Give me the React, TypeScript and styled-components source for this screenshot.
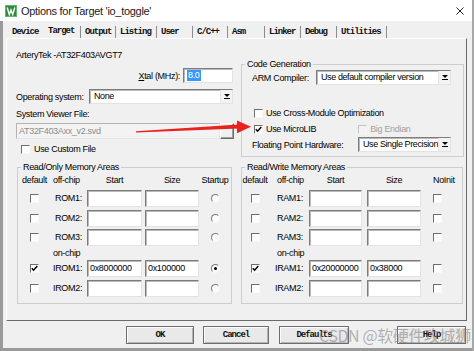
import React from "react";
import styled, { createGlobalStyle } from "styled-components";

const SANS = `"Liberation Sans", Arial, sans-serif`;
const MONO = `"Liberation Mono", "Courier New", monospace`;

const Global = createGlobalStyle`
  html, body { margin: 0; padding: 0; background: #f0f0f0; }
  body { width: 474px; height: 351px; overflow: hidden; }
  * { box-sizing: border-box; }
`;

const Window = styled.div`
  width: 474px;
  height: 351px;
  display: flex;
  flex-direction: column;
  background: #f0f0f0;
  position: relative;
  overflow: hidden;
  font-family: ${SANS};
  font-size: 9px;
  letter-spacing: -0.32px;
  color: #000;
  border-right: 2px solid #a8a8a8;
`;

const TitleBar = styled.div`
  height: 21px;
  flex: none;
  background: #fff;
  display: flex;
  align-items: center;
  padding-left: 5px;
`;

const TitleText = styled.span`
  font-family: "Liberation Sans", Arial, sans-serif;
  font-size: 11px;
  letter-spacing: -0.3px;
  margin-left: 4px;
  color: #1a1a1a;
`;

const CloseBox = styled.div`
  margin-left: auto;
  margin-right: 8px;
  width: 8px;
  height: 8px;
  display: flex;
`;

const Body = styled.div`
  flex: 1;
  display: flex;
  flex-direction: column;
  border-left: 3px solid #9a9a9a;
  border-bottom: 3px solid #9a9a9a;
  padding: 0 5px 0 3px;
`;

const TabStrip = styled.div`
  height: 17px;
  display: flex;
  align-items: flex-end;
  padding-left: 2px;
`;

const Tab = styled.div<{ $w: number; $active?: boolean; $sep?: boolean }>`
  width: ${(p) => p.$w}px;
  height: 12px;
  padding-left: 4px;
  border-right: 1px solid ${(p) => (p.$sep ? "#8c8c8c" : "transparent")};
  font-family: ${MONO};
  font-weight: bold;
  font-size: 9px;
  letter-spacing: -1px;
  line-height: ${(p) => (p.$active ? 10 : 12)}px;
  white-space: nowrap;
  color: #111;
`;

const TabPanel = styled.div`
  height: 283px;
  border-top: 1px solid #fff;
  border-left: 1px solid #fff;
  border-right: 1px solid #6a6a6a;
  border-bottom: 1px solid #6a6a6a;
  display: grid;
  grid-template-columns: 218px 223px;
  column-gap: 7px;
  row-gap: 5px;
  align-content: start;
  padding: 11px 0 0 9px;
`;

const LeftCol = styled.div`
  display: flex;
  flex-direction: column;
`;

const TextLine = styled.div<{ $mt?: number }>`
  height: 11px;
  line-height: 11px;
  margin-top: ${(p) => p.$mt ?? 0}px;
  white-space: nowrap;
`;

const XtalRow = styled.div`
  margin-top: 7px;
  height: 15px;
  display: flex;
  justify-content: flex-end;
  align-items: center;
  gap: 3px;
  padding-right: 1px;
`;

const FieldRow = styled.div<{ $cols: string; $mt: number; $h?: number }>`
  margin-top: ${(p) => p.$mt}px;
  height: ${(p) => p.$h ?? 15}px;
  display: grid;
  grid-template-columns: ${(p) => p.$cols};
  align-items: center;
  white-space: nowrap;
`;

const Sunken = styled.div<{ $w?: number; $h?: number; $disabled?: boolean }>`
  width: ${(p) => (p.$w ? `${p.$w}px` : "auto")};
  height: ${(p) => p.$h ?? 15}px;
  background: ${(p) => (p.$disabled ? "#f3f3f3" : "#fff")};
  border: 1px solid;
  border-color: ${(p) =>
    p.$disabled ? "#b4b4b4 #e6e6e6 #e6e6e6 #b4b4b4" : "#7c7c7c #e3e3e3 #e3e3e3 #7c7c7c"};
  box-shadow: ${(p) => (p.$disabled ? "none" : "inset 1px 1px 0 #b9b9b9")};
  color: ${(p) => (p.$disabled ? "#8c8c8c" : "#000")};
  display: flex;
  align-items: center;
  padding-left: 2px;
  overflow: hidden;
  white-space: nowrap;
  line-height: 11px;
`;

const Selected = styled.span`
  background: #3399ff;
  color: #fff;
  padding: 0 1px;
  margin-left: 1px;
`;

const ComboText = styled.span`
  flex: 1;
  padding-left: 2px;
  letter-spacing: -0.4px;
  overflow: hidden;
`;

const ComboButton = styled.div`
  flex: none;
  width: 12px;
  height: 100%;
  display: flex;
  align-items: center;
  justify-content: center;
  flex-direction: column;
  gap: 1px;
  background: #f3f3f3;
  border-left: 1px solid #e6e6e6;
  &::before {
    content: "";
    width: 0;
    height: 0;
    border-left: 3px solid transparent;
    border-right: 3px solid transparent;
    border-top: 3px solid #000;
  }
  &::after {
    content: "";
    width: 6px;
    height: 1px;
    background: #000;
  }
`;

const BrowseButton = styled.div`
  width: 14px;
  height: 16px;
  background: #f0f0f0;
  border: 1px solid;
  border-color: #fff #6a6a6a #6a6a6a #fff;
  box-shadow: inset -1px -1px 0 #a0a0a0;
`;

const CheckRow = styled.div<{ $mt: number; $ml?: number }>`
  margin-top: ${(p) => p.$mt}px;
  margin-left: ${(p) => p.$ml ?? 0}px;
  height: 10px;
  display: flex;
  align-items: center;
  white-space: nowrap;
`;

const CheckLabel = styled.span<{ $disabled?: boolean; $ml?: number }>`
  margin-left: ${(p) => p.$ml ?? 3}px;
  line-height: 10px;
  color: ${(p) => (p.$disabled ? "#a0a0a0" : "#000")};
`;

const CheckBox = styled.span<{ $disabled?: boolean; $ml?: number }>`
  flex: none;
  display: inline-flex;
  align-items: center;
  justify-content: center;
  width: 9px;
  height: 9px;
  margin-left: ${(p) => p.$ml ?? 0}px;
  background: ${(p) => (p.$disabled ? "#f2f2f2" : "#fdfdfd")};
  border: 1px solid;
  border-color: ${(p) =>
    p.$disabled ? "#c4c4c4 #f6f6f6 #f6f6f6 #c4c4c4" : "#6e6e6e #f8f8f8 #f8f8f8 #6e6e6e"};
`;

const Radio = styled.span<{ $on?: boolean }>`
  width: 9px;
  height: 9px;
  border-radius: 50%;
  border: 1px solid;
  border-color: #7a7a7a #f6f6f6 #f6f6f6 #7a7a7a;
  background: #fbfbfb;
  display: inline-flex;
  align-items: center;
  justify-content: center;
  &::after {
    content: "";
    width: 3px;
    height: 3px;
    border-radius: 50%;
    background: ${(p) => (p.$on ? "#000" : "transparent")};
  }
`;

const Group = styled.fieldset<{ $mt?: number; $ml?: number; $w: number }>`
  margin: ${(p) => p.$mt ?? 0}px 0 0 ${(p) => p.$ml ?? 0}px;
  width: ${(p) => p.$w}px;
  padding: 0;
  border: 1px solid #cdcdcd;
  min-width: 0;
`;

const Legend = styled.legend`
  margin-left: 3px;
  padding: 0 2px;
  height: 11px;
  line-height: 11px;
`;

const GroupInner = styled.div<{ $pl: number; $pb: number }>`
  padding: 0 0 ${(p) => p.$pb}px ${(p) => p.$pl}px;
  display: flex;
  flex-direction: column;
`;

const MemGrid = styled.div<{ $cols: string }>`
  display: grid;
  grid-template-columns: ${(p) => p.$cols};
  grid-template-rows: 15px 21px 19px 19px 12px 19px 20px;
  align-items: center;
  padding-bottom: 5px;
  white-space: nowrap;
`;

const Head = styled.span<{ $align?: string; $pl?: number }>`
  justify-self: ${(p) => p.$align ?? "center"};
  padding-left: ${(p) => p.$pl ?? 0}px;
  line-height: 11px;
`;

const Cell = styled.span<{ $align?: string; $pl?: number }>`
  justify-self: ${(p) => p.$align ?? "start"};
  padding-left: ${(p) => p.$pl ?? 0}px;
  display: inline-flex;
  line-height: 11px;
`;

const OnChip = styled.span<{ $pl: number }>`
  grid-column: 2 / -1;
  padding-left: ${(p) => p.$pl}px;
  align-self: end;
  line-height: 11px;
`;

const MemInput = styled(Sunken)`
  height: 17px;
  align-items: flex-start;
  padding-top: 2px;
`;

const Spacer = styled.span``;

const Footer = styled.div`
  height: 27px;
  display: flex;
  align-items: center;
  padding-left: 120px;
  padding-right: 1px;
`;

const Button = styled.div<{ $w: number; $ml: number; $auto?: boolean }>`
  width: ${(p) => p.$w}px;
  height: 18px;
  margin-left: ${(p) => (p.$auto ? "auto" : `${p.$ml}px`)};
  background: #e9e9e9;
  border: 1px solid #6e6e6e;
  box-shadow: inset 1px 1px 0 #fbfbfb, inset -1px -1px 0 #b4b4b4;
  display: flex;
  align-items: center;
  justify-content: center;
  font-family: ${MONO};
  font-weight: bold;
  font-size: 9px;
  letter-spacing: -1px;
  color: #111;
`;

const Watermark = styled.div`
  position: absolute;
  left: 319px;
  top: 325px;
  font-family: "Noto Sans CJK SC", "Noto Sans", sans-serif;
  font-size: 16px;
  line-height: 20px;
  letter-spacing: -0.4px;
  color: rgba(120, 120, 120, 0.55);
  white-space: nowrap;
  pointer-events: none;
`;

const ArrowLayer = styled.svg`
  position: absolute;
  left: 0;
  top: 0;
  pointer-events: none;
`;

const Check = () => (
  <svg width="7" height="7" viewBox="0 0 7 7">
    <polyline points="0.8,3.2 2.6,5.2 6.3,0.9" fill="none" stroke="#000" strokeWidth="1.5" />
  </svg>
);

const KeilIcon = () => (
  <svg width="12" height="12" viewBox="0 0 12 12">
    <rect x="0" y="0" width="12" height="12" fill="#2f8a3a" />
    <rect x="0.5" y="0.5" width="11" height="11" fill="none" stroke="#5fb86a" strokeWidth="1" />
    <polyline points="2.2,2.5 4.3,9.5 6,5 7.7,9.5 9.8,2.5" fill="none" stroke="#fff" strokeWidth="1.4" />
  </svg>
);

const tabs: [string, number][] = [
  ["Device", 36],
  ["Target", 37],
  ["Output", 35],
  ["Listing", 41],
  ["User", 36],
  ["C/C++", 35],
  ["Asm", 37],
  ["Linker", 36],
  ["Debug", 36],
  ["Utilities", 50],
];

type MemRow = { label: string; start: string; size: string; def: boolean; flag: boolean };

const romRows: MemRow[] = [
  { label: "ROM1:", start: "", size: "", def: false, flag: false },
  { label: "ROM2:", start: "", size: "", def: false, flag: false },
  { label: "ROM3:", start: "", size: "", def: false, flag: false },
];
const iromRows: MemRow[] = [
  { label: "IROM1:", start: "0x8000000", size: "0x100000", def: true, flag: true },
  { label: "IROM2:", start: "", size: "", def: false, flag: false },
];
const ramRows: MemRow[] = [
  { label: "RAM1:", start: "", size: "", def: false, flag: false },
  { label: "RAM2:", start: "", size: "", def: false, flag: false },
  { label: "RAM3:", start: "", size: "", def: false, flag: false },
];
const iramRows: MemRow[] = [
  { label: "IRAM1:", start: "0x20000000", size: "0x38000", def: true, flag: false },
  { label: "IRAM2:", start: "", size: "", def: false, flag: false },
];

function MemoryGroup(props: {
  title: string;
  width: number;
  ml: number;
  cols: string;
  labelPad: number;
  last: string;
  lastPad: number;
  radio: boolean;
  off: MemRow[];
  on: MemRow[];
  offLabelPad: number;
  onLabelPad: number;
  lastAlign: string;
}) {
  const renderRow = (r: MemRow, pad: number) => (
    <React.Fragment key={r.label}>
      <Cell $align="center">
        <CheckBox>{r.def ? <Check /> : null}</CheckBox>
      </Cell>
      <Cell $pl={pad}>{r.label}</Cell>
      <MemInput $h={17}>{r.start}</MemInput>
      <Spacer />
      <MemInput $h={17}>{r.size}</MemInput>
      <Cell $align={props.lastAlign} $pl={props.lastPad}>
        {props.radio ? <Radio $on={r.flag} /> : <CheckBox>{r.flag ? <Check /> : null}</CheckBox>}
      </Cell>
    </React.Fragment>
  );
  return (
    <Group $w={props.width} $ml={props.ml}>
      <Legend>{props.title}</Legend>
      <GroupInner $pl={0} $pb={0}>
        <MemGrid $cols={props.cols}>
          <Head>default</Head>
          <Head $align="start" $pl={props.labelPad}>
            off-chip
          </Head>
          <Head>Start</Head>
          <Spacer />
          <Head>Size</Head>
          <Head $align={props.lastAlign} $pl={props.lastPad}>
            {props.last}
          </Head>
          {props.off.map((r) => renderRow(r, props.offLabelPad))}
          <OnChip $pl={props.labelPad}>on-chip</OnChip>
          {props.on.map((r) => renderRow(r, props.onLabelPad))}
        </MemGrid>
      </GroupInner>
    </Group>
  );
}

export default function App() {
  return (
    <>
      <Global />
      <Window>
        <TitleBar>
          <KeilIcon />
          <TitleText>Options for Target 'io_toggle'</TitleText>
          <CloseBox>
            <svg width="8" height="8" viewBox="0 0 8 8">
              <path d="M0.5 0.5 L7.5 7.5 M7.5 0.5 L0.5 7.5" stroke="#222" strokeWidth="1" />
            </svg>
          </CloseBox>
        </TitleBar>
        <Body>
          <TabStrip>
            {tabs.map(([t, w], i) => (
              <Tab key={t} $w={w} $active={t === "Target"} $sep={i > 0}>
                {t}
              </Tab>
            ))}
          </TabStrip>
          <TabPanel>
            <LeftCol>
              <TextLine>ArteryTek -AT32F403AVGT7</TextLine>
              <XtalRow>
                <span>
                  <u>X</u>tal (MHz):
                </span>
                <Sunken $w={50} $h={15}>
                  <Selected>8.0</Selected>
                </Sunken>
              </XtalRow>
              <FieldRow $cols="73px 144px" $mt={6}>
                <span>Operating system:</span>
                <Sunken $w={144} $h={15}>
                  <ComboText>None</ComboText>
                  <ComboButton />
                </Sunken>
              </FieldRow>
              <TextLine $mt={5}>System Viewer File:</TextLine>
              <FieldRow $cols="204px 14px" $mt={3} $h={16}>
                <Sunken $w={204} $h={16} $disabled>
                  AT32F403Axx_v2.svd
                </Sunken>
                <BrowseButton />
              </FieldRow>
              <CheckRow $mt={5} $ml={5}>
                <CheckBox />
                <CheckLabel $ml={4}>Use Custom File</CheckLabel>
              </CheckRow>
            </LeftCol>

            <Group $w={223} $mt={9}>
              <Legend>Code Generation</Legend>
              <GroupInner $pl={10} $pb={4}>
                <FieldRow $cols="64px 135px" $mt={0}>
                  <span>ARM Compiler:</span>
                  <Sunken $w={135} $h={15}>
                    <ComboText>Use default compiler version</ComboText>
                    <ComboButton />
                  </Sunken>
                </FieldRow>
                <CheckRow $mt={23} $ml={2}>
                  <CheckBox />
                  <CheckLabel>Use Cross-Module Optimization</CheckLabel>
                </CheckRow>
                <CheckRow $mt={6} $ml={2}>
                  <CheckBox>
                    <Check />
                  </CheckBox>
                  <CheckLabel>Use MicroLIB</CheckLabel>
                  <CheckBox $disabled $ml={42} />
                  <CheckLabel $disabled $ml={3}>
                    Big Endian
                  </CheckLabel>
                </CheckRow>
                <FieldRow $cols="106px 93px" $mt={3}>
                  <span>Floating Point Hardware:</span>
                  <Sunken $w={93} $h={15}>
                    <ComboText>Use Single Precision</ComboText>
                    <ComboButton />
                  </Sunken>
                </FieldRow>
              </GroupInner>
            </Group>

            <MemoryGroup
              title="Read/Only Memory Areas"
              width={215}
              ml={1}
              cols="33px 36px 55px 3px 54px 32px"
              labelPad={2}
              offLabelPad={4}
              onLabelPad={2}
              last="Startup"
              lastPad={0}
              lastAlign="center"
              radio
              off={romRows}
              on={iromRows}
            />
            <MemoryGroup
              title="Read/Write Memory Areas"
              width={222}
              ml={0}
              cols="26px 41px 53px 5px 54px 41px"
              labelPad={9}
              offLabelPad={9}
              onLabelPad={7}
              last="NoInit"
              lastPad={12}
              lastAlign="start"
              radio={false}
              off={ramRows}
              on={iramRows}
            />
          </TabPanel>
          <Footer>
            <Button $w={68} $ml={0}>OK</Button>
            <Button $w={66} $ml={9}>Cancel</Button>
            <Button $w={70} $ml={10}>Defaults</Button>
            <Button $w={69} $ml={0} $auto>Help</Button>
          </Footer>
        </Body>
        <ArrowLayer width="474" height="351" viewBox="0 0 474 351">
          <polygon points="136,131.3 239,124.6 239,128.6 136,132.6" fill="#e8231e" />
          <polygon points="237,120.5 251,126.7 237,133.3" fill="#e8231e" />
        </ArrowLayer>
        <Watermark>CSDN @软硬件攻城狮</Watermark>
      </Window>
    </>
  );
}
